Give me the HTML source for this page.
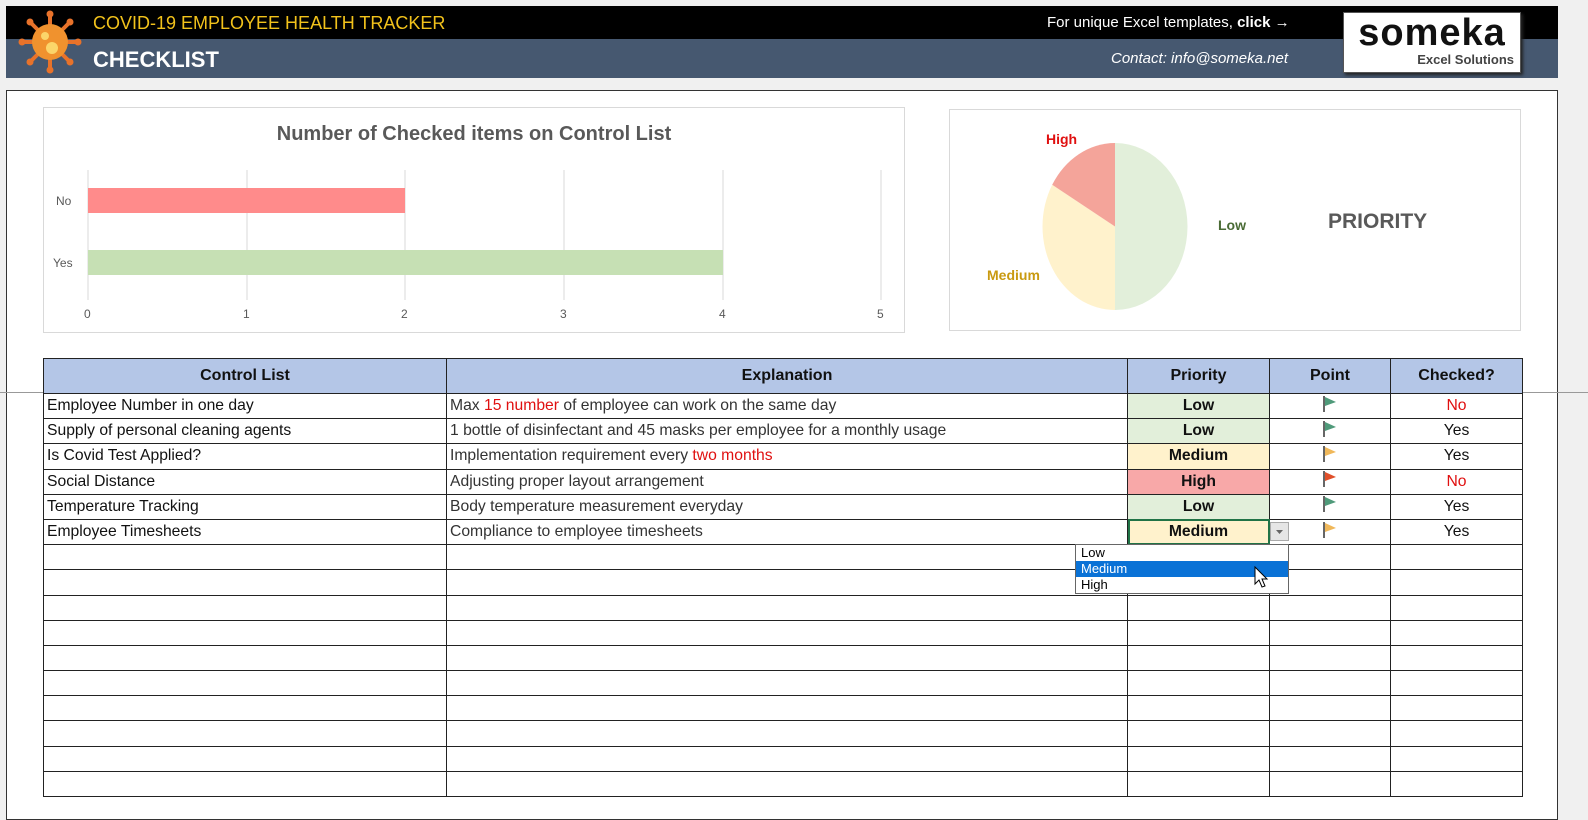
<!DOCTYPE html>
<html><head><meta charset="utf-8"><style>
*{margin:0;padding:0;box-sizing:border-box}
body{width:1588px;height:814px;background:#f0f0f0;position:relative;overflow:hidden;font-family:"Liberation Sans",Arial,sans-serif}
.a{position:absolute}
.sheet{left:6px;top:90px;width:1552px;height:730px;background:#fff;border:1px solid #333}
.box{background:#fff;border:1px solid #d9d9d9}
table{border-collapse:collapse;position:absolute;left:43px;top:358px;table-layout:fixed}
td,th{border:1px solid #222;height:25.2px;font-size:15.7px;white-space:nowrap;overflow:hidden;padding:0 3px;color:#111}
th{background:#b4c6e7;height:35px;font-size:16px;font-weight:bold;text-align:center}
td.c{text-align:center}
.r{color:#e01010}
.lo{background:#e2efda;font-weight:bold;text-align:center}
.me{background:#fff2cc;font-weight:bold;text-align:center}
.hi{background:#f8a8a8;font-weight:bold;text-align:center}
.ex{color:#333}
</style></head><body>
<div class="a" style="left:6px;top:6px;width:1552px;height:33px;background:#000"></div>
<div class="a" style="left:6px;top:39px;width:1552px;height:39px;background:#465870"></div>
<svg class="a" style="left:18px;top:10px" width="64" height="64" viewBox="0 0 64 64">
<g stroke="#e8722a" stroke-width="4" stroke-linecap="round">
<line x1="32" y1="32" x2="32" y2="4"/><line x1="32" y1="32" x2="32" y2="60"/><line x1="32" y1="32" x2="4" y2="32"/><line x1="32" y1="32" x2="60" y2="32"/>
<line x1="32" y1="32" x2="12" y2="12"/><line x1="32" y1="32" x2="52" y2="12"/><line x1="32" y1="32" x2="12" y2="52"/><line x1="32" y1="32" x2="52" y2="52"/></g>
<g fill="#e8722a"><circle cx="32" cy="4" r="3.5"/><circle cx="32" cy="60" r="3.5"/><circle cx="4" cy="32" r="3.5"/><circle cx="60" cy="32" r="3.5"/><circle cx="12" cy="12" r="3.5"/><circle cx="52" cy="12" r="3.5"/><circle cx="12" cy="52" r="3.5"/><circle cx="52" cy="52" r="3.5"/></g>
<circle cx="32" cy="32" r="18" fill="#f0922e"/><circle cx="27" cy="26" r="4" fill="#fbd56a"/><circle cx="34" cy="38" r="6" fill="#fbd56a"/></svg>
<div class="a" style="left:93px;top:13px;color:#f2c21b;font-size:18px">COVID-19 EMPLOYEE HEALTH TRACKER</div>
<div class="a" style="left:93px;top:47px;color:#fff;font-size:22px;font-weight:bold">CHECKLIST</div>
<div class="a" style="left:1047px;top:14px;color:#fff;font-size:15px">For unique Excel templates, <b>click →</b></div>
<div class="a" style="left:1111px;top:50px;color:#fff;font-size:15px;font-style:italic">Contact: info@someka.net</div>
<div class="a" style="left:1343px;top:12px;width:178px;height:61px;background:#fff;border:1px solid #555;box-shadow:2px 2px 3px #222;text-align:center">
<div style="font-size:38px;line-height:40px;color:#111;letter-spacing:1px;font-weight:bold">someka</div>
<div style="font-size:13px;font-weight:bold;color:#444;text-align:right;padding-right:6px;line-height:14px">Excel Solutions</div></div>
<div class="a sheet"></div>
<div class="a" style="left:0;top:392px;width:1588px;height:1px;background:#999"></div>
<div class="a box" style="left:43px;top:107px;width:862px;height:226px"></div>
<div class="a" style="left:43px;top:123px;width:862px;text-align:center;font-size:20px;font-weight:bold;color:#595959">Number of Checked items on Control List</div>
<svg class="a" style="left:43px;top:107px" width="862" height="226">
<g stroke="#d9d9d9"><line x1="45" y1="63" x2="45" y2="193"/><line x1="204" y1="63" x2="204" y2="193"/><line x1="362" y1="63" x2="362" y2="193"/><line x1="521" y1="63" x2="521" y2="193"/><line x1="680" y1="63" x2="680" y2="193"/><line x1="838" y1="63" x2="838" y2="193"/></g>
<rect x="45" y="81" width="317" height="25" fill="#ff8b8b"/>
<rect x="45" y="143" width="635" height="25" fill="#c6e0b4"/>
<g font-size="12" fill="#595959" font-family="Liberation Sans"><text x="13" y="98">No</text><text x="10" y="160">Yes</text>
<text x="41" y="211">0</text><text x="200" y="211">1</text><text x="358" y="211">2</text><text x="517" y="211">3</text><text x="676" y="211">4</text><text x="834" y="211">5</text></g></svg>
<div class="a box" style="left:949px;top:109px;width:572px;height:222px"></div>
<svg class="a" style="left:949px;top:109px" width="572" height="222">
<path d="M166 117.5 L166 34 A72.5 83.5 0 0 1 166 201 Z" fill="#e2efda"/>
<path d="M166 117.5 L166 201 A72.5 83.5 0 0 1 103.2 75.8 Z" fill="#fff2cc"/>
<path d="M166 117.5 L103.2 75.8 A72.5 83.5 0 0 1 166 34 Z" fill="#f4a49a"/>
<g font-family="Liberation Sans" font-weight="bold" font-size="14"><text x="97" y="35" fill="#e01010">High</text><text x="269" y="121" fill="#4a6b35">Low</text><text x="38" y="171" fill="#c99a10">Medium</text>
<text x="379" y="119" font-size="21" fill="#595959">PRIORITY</text></g></svg>
<table>
<colgroup><col style="width:403px"><col style="width:681px"><col style="width:142px"><col style="width:121px"><col style="width:132px"></colgroup>
<tr><th>Control List</th><th>Explanation</th><th>Priority</th><th>Point</th><th>Checked?</th></tr>
<tr><td>Employee Number in one day</td><td class="ex">Max <span class="r">15 number</span> of employee can work on the same day</td><td class="lo">Low</td><td class="c"><svg width="16" height="16"><line x1="2" y1="0" x2="2" y2="16" stroke="#666" stroke-width="2"/><path d="M3 1 L14 6 L3 10Z" fill="#4f9a7a"/></svg></td><td class="c r">No</td></tr>
<tr><td>Supply of personal cleaning agents</td><td class="ex">1 bottle of disinfectant and 45 masks per employee for a monthly usage</td><td class="lo">Low</td><td class="c"><svg width="16" height="16"><line x1="2" y1="0" x2="2" y2="16" stroke="#666" stroke-width="2"/><path d="M3 1 L14 6 L3 10Z" fill="#4f9a7a"/></svg></td><td class="c">Yes</td></tr>
<tr><td>Is Covid Test Applied?</td><td class="ex">Implementation requirement every <span class="r">two months</span></td><td class="me">Medium</td><td class="c"><svg width="16" height="16"><line x1="2" y1="0" x2="2" y2="16" stroke="#666" stroke-width="2"/><path d="M3 1 L14 6 L3 10Z" fill="#f0b85a"/></svg></td><td class="c">Yes</td></tr>
<tr><td>Social Distance</td><td class="ex">Adjusting proper layout arrangement</td><td class="hi">High</td><td class="c"><svg width="16" height="16"><line x1="2" y1="0" x2="2" y2="16" stroke="#666" stroke-width="2"/><path d="M3 1 L14 6 L3 10Z" fill="#e0502a"/></svg></td><td class="c r">No</td></tr>
<tr><td>Temperature Tracking</td><td class="ex">Body temperature measurement everyday</td><td class="lo">Low</td><td class="c"><svg width="16" height="16"><line x1="2" y1="0" x2="2" y2="16" stroke="#666" stroke-width="2"/><path d="M3 1 L14 6 L3 10Z" fill="#4f9a7a"/></svg></td><td class="c">Yes</td></tr>
<tr><td>Employee Timesheets</td><td class="ex">Compliance to employee timesheets</td><td class="me" style="outline:2px solid #217346;outline-offset:-2px">Medium</td><td class="c"><svg width="16" height="16"><line x1="2" y1="0" x2="2" y2="16" stroke="#666" stroke-width="2"/><path d="M3 1 L14 6 L3 10Z" fill="#f0b85a"/></svg></td><td class="c">Yes</td></tr>
<tr><td></td><td></td><td></td><td></td><td></td></tr>
<tr><td></td><td></td><td></td><td></td><td></td></tr>
<tr><td></td><td></td><td></td><td></td><td></td></tr>
<tr><td></td><td></td><td></td><td></td><td></td></tr>
<tr><td></td><td></td><td></td><td></td><td></td></tr>
<tr><td></td><td></td><td></td><td></td><td></td></tr>
<tr><td></td><td></td><td></td><td></td><td></td></tr>
<tr><td></td><td></td><td></td><td></td><td></td></tr>
<tr><td></td><td></td><td></td><td></td><td></td></tr>
<tr><td></td><td></td><td></td><td></td><td></td></tr>
</table>
<div class="a" style="left:1270px;top:522px;width:19px;height:19px;background:#e6e6e6;border:1px solid #aaa"><svg width="17" height="17"><path d="M5 7 L12 7 L8.5 11Z" fill="#666"/></svg></div>
<div class="a" style="left:1075px;top:544px;width:214px;height:50px;background:#fff;border:1px solid #666;font-size:13px;line-height:16px">
<div style="padding-left:5px">Low</div><div style="padding-left:5px;background:#0a72d6;color:#fff">Medium</div><div style="padding-left:5px">High</div></div>
<svg class="a" style="left:1254px;top:566px" width="16" height="24"><path d="M1 1 L1 18 L5 14 L8 21 L11 20 L8 13 L13 13Z" fill="#fff" stroke="#000" stroke-width="1"/></svg>
</body></html>
